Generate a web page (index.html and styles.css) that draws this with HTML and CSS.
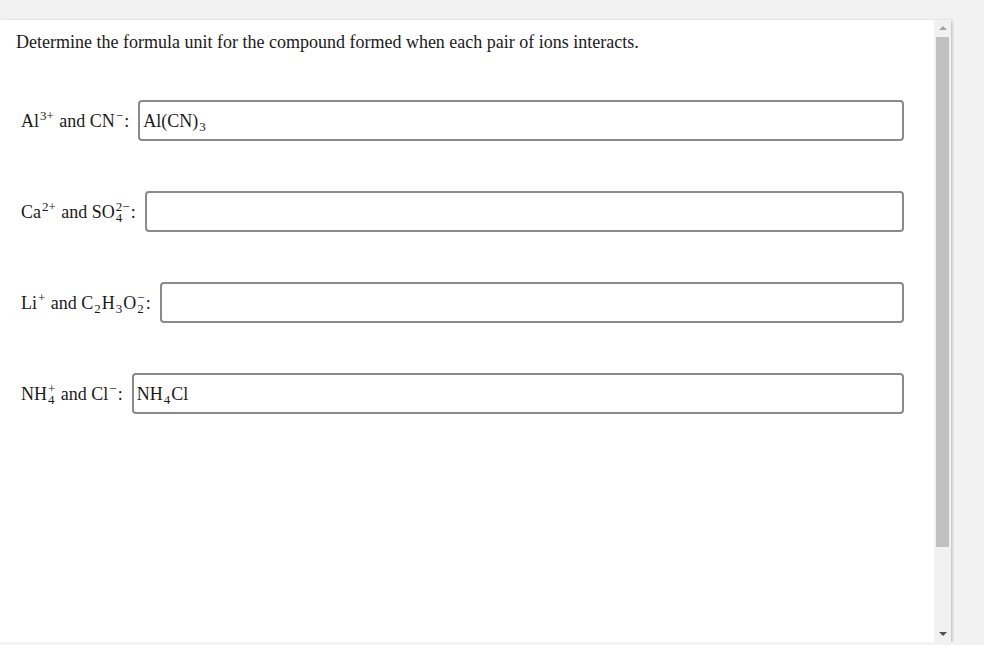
FILE: index.html
```html
<!DOCTYPE html>
<html lang="en">
<head>
    <meta charset="UTF-8">
    <title>Formula Units</title>
    <link rel="stylesheet" href="styles.css">
</head>
<body>
    <div class="panel">
        <div class="content">
            <p class="prompt">Determine the formula unit for the compound formed when each pair of ions interacts.</p>

            <div class="row">
                <span class="label">Al<span class="sup">3+</span> and CN<span class="sup">&minus;</span>:</span>
                <div class="answer"><span>Al(CN)<span class="sub">3</span></span></div>
            </div>

            <div class="row">
                <span class="label">Ca<span class="sup">2+</span> and SO<span class="stack"><span>2&minus;</span><span>4</span></span>:</span>
                <div class="answer"></div>
            </div>

            <div class="row">
                <span class="label">Li<span class="sup">+</span> and C<span class="sub">2</span>H<span class="sub">3</span>O<span class="stack"><span>&minus;</span><span>2</span></span>:</span>
                <div class="answer"></div>
            </div>

            <div class="row">
                <span class="label">NH<span class="stack"><span>+</span><span>4</span></span> and Cl<span class="sup">&minus;</span>:</span>
                <div class="answer"><span>NH<span class="sub">4</span>Cl</span></div>
            </div>
        </div>

        <div class="scrollbar">
            <span class="arrow-up"></span>
            <div class="thumb"></div>
            <span class="arrow-down"></span>
        </div>
    </div>
</body>
</html>
```

FILE: styles.css
```css
* {
    margin: 0;
    padding: 0;
    box-sizing: border-box;
}

body {
    background-color: #f2f2f2;
    font-family: 'Liberation Serif', 'Times New Roman', serif;
    color: #1a1a1a;
    padding-top: 20px;
}

.panel {
    width: 951px;
    height: 622px;
    background-color: #fff;
    display: flex;
    box-shadow: 1px 1px 3px rgba(0, 0, 0, 0.25);
}

.content {
    flex: 1;
    padding: 12px 30px 0 16px;
}

.prompt {
    font-size: 18px;
    line-height: 20px;
    margin-bottom: 48px;
}

.row {
    display: flex;
    align-items: center;
    padding-left: 5px;
    margin-bottom: 50px;
    font-size: 18px;
    line-height: 20px;
}

.label {
    margin-right: 9px;
    white-space: nowrap;
}

.answer {
    flex: 1;
    height: 41px;
    border: 2px solid #8a8a8a;
    border-radius: 4px;
    padding: 0 3px;
    display: flex;
    align-items: center;
}

.sup,
.sub {
    font-size: 13px;
    line-height: 0;
    padding: 0 1px;
}

.sup {
    vertical-align: 7px;
}

.sub {
    vertical-align: -4px;
}

.stack {
    display: inline-flex;
    flex-direction: column;
    vertical-align: 7px;
    font-size: 13px;
    line-height: 11px;
    padding: 0 1px;
    margin: -6px 0 -10px;
}

.scrollbar {
    width: 17px;
    background-color: #f1f1f1;
    display: flex;
    flex-direction: column;
    align-items: center;
    padding: 6px 0;
}

.arrow-up,
.arrow-down {
    width: 0;
    height: 0;
    border-left: 4px solid transparent;
    border-right: 4px solid transparent;
}

.arrow-up {
    border-bottom: 4px solid #a3a3a3;
}

.arrow-down {
    border-top: 4px solid #505050;
    margin-top: auto;
}

.thumb {
    width: 13px;
    height: 510px;
    margin-top: 7px;
    background-color: #c1c1c1;
}
```
